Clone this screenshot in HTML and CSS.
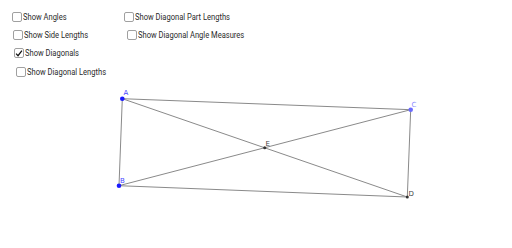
FILE: index.html
```html
<!DOCTYPE html>
<html>
<head>
<meta charset="utf-8">
<link rel="stylesheet" href="styles.css">
</head>
<body>
<div class="canvas">
  <svg class="drawing" width="512" height="248" viewBox="0 0 512 248">
    <g stroke="#8a8a8a" stroke-width="1" fill="none">
      <line x1="122.3" y1="98.7" x2="410.7" y2="109.7"/>
      <line x1="122.3" y1="98.7" x2="119" y2="185.7"/>
      <line x1="119" y1="185.7" x2="407.3" y2="197"/>
      <line x1="410.7" y1="109.7" x2="407.3" y2="197"/>
      <line x1="122.3" y1="98.7" x2="407.3" y2="197"/>
      <line x1="119" y1="185.7" x2="410.7" y2="109.7"/>
    </g>
    <circle cx="122.3" cy="98.7" r="2.3" fill="#1a1aff"/>
    <circle cx="119" cy="185.7" r="2.3" fill="#1a1aff"/>
    <circle cx="410.7" cy="109.7" r="2.3" fill="#6b6bff"/>
    <circle cx="407.3" cy="197" r="1.5" fill="#333"/>
    <circle cx="264.7" cy="147.7" r="1.5" fill="#333"/>
    <g class="lbl">
      <text x="123.5" y="95" fill="#4646ff">A</text>
      <text x="120" y="182.5" fill="#4646ff">B</text>
      <text x="411.5" y="106.5" fill="#8c8cff">C</text>
      <text x="408.5" y="195.5" fill="#444">D</text>
      <text x="265.5" y="145.5" fill="#444">E</text>
    </g>
  </svg>
  <label class="cb cb1"><span class="box"></span><span class="txt">Show Angles</span></label>
  <label class="cb cb2"><span class="box"></span><span class="txt">Show Side Lengths</span></label>
  <label class="cb cb3"><span class="box"><svg width="9" height="9" viewBox="0 0 9 9"><path d="M1.2 4.6 L3.4 7 L7.8 1.2" stroke="#111" stroke-width="1.4" fill="none"/></svg></span><span class="txt">Show Diagonals</span></label>
  <label class="cb cb4"><span class="box"></span><span class="txt">Show Diagonal Lengths</span></label>
  <label class="cb cb5"><span class="box"></span><span class="txt">Show Diagonal Part Lengths</span></label>
  <label class="cb cb6"><span class="box"></span><span class="txt">Show Diagonal Angle Measures</span></label>
</div>
</body>
</html>
```
FILE: styles.css
```css
html, body {
  margin: 0;
  padding: 0;
  background: #fff;
}
.canvas {
  position: relative;
  width: 512px;
  height: 248px;
  overflow: hidden;
  font-family: Roboto, "Liberation Sans", sans-serif;
}
.drawing {
  position: absolute;
  left: 0;
  top: 0;
}
.lbl text {
  font-family: "DejaVu Sans", sans-serif;
  font-size: 7px;
}
.cb {
  position: absolute;
  display: flex;
  align-items: center;
  gap: 1px;
  font-size: 9px;
  color: #2a2a2a;
  white-space: nowrap;
  line-height: 10px;
}
.txt {
  display: inline-block;
  transform: scaleX(0.84);
  transform-origin: left center;
}
.box {
  display: flex;
  align-items: center;
  justify-content: center;
  width: 8px;
  height: 8px;
  border: 1px solid #a0a0a0;
  border-radius: 2px;
  background: #fff;
  box-sizing: content-box;
}
.cb1 { left: 12px; top: 11.5px; }
.cb2 { left: 13px; top: 29.5px; }
.cb3 { left: 14px; top: 48px; }
.cb4 { left: 16px; top: 67px; }
.cb5 { left: 124px; top: 11.5px; }
.cb6 { left: 127px; top: 30px; }
```
